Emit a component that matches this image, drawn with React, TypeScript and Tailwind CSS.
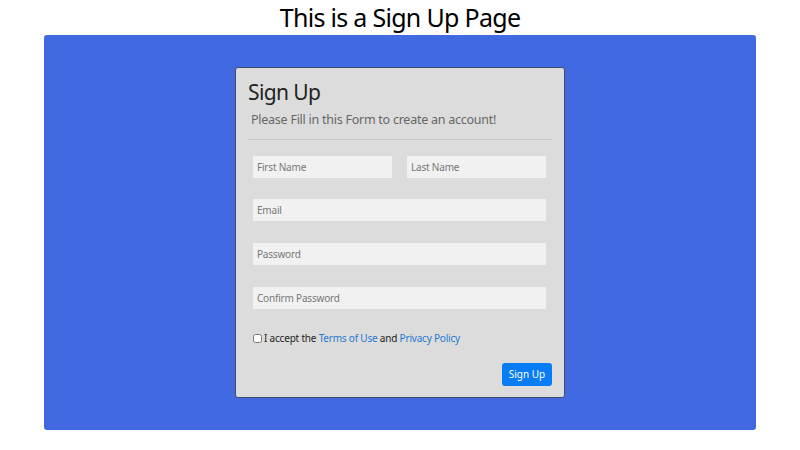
import React from "react";

export default function App() {
  const font = { fontFamily: '"Noto Sans", "Open Sans", sans-serif' };
  const inputCls =
    "h-[22px] bg-[#f1f1f1] px-[4px] text-[10px] tracking-[-0.2px] text-[#333] placeholder:text-[#777] outline-none border-0";
  return (
    <div className="w-[800px] h-[450px] bg-white" style={font}>
      <h1 className="h-[35px] text-center text-[25px] tracking-[-0.7px] leading-[35px] text-black">
        This is a Sign Up Page
      </h1>
      <div className="mx-[44px] h-[395px] rounded-[3px] bg-[#4169e1] pt-[32px]">
        <div className="mx-auto w-[330px] h-[331px] rounded-[3px] border border-[#3b4a66] bg-[#dcdcdc] px-[12px] pt-[9px]">
          <h2 className="text-[21px] tracking-[-0.6px] leading-[30px] text-[#222] font-normal">Sign Up</h2>
          <p className="mt-[4px] pl-[3px] text-[12.5px] tracking-[-0.25px] leading-[18px] text-[#666]">
            Please Fill in this Form to create an account!
          </p>
          <div className="mt-[10px] h-px bg-[#c8c8c8]" />
          <div className="pl-[5px] pr-[6px] pt-[16px]">
            <div className="flex gap-[15px]">
              <input className={inputCls + " w-[139px]"} placeholder="First Name" />
              <input className={inputCls + " w-[139px]"} placeholder="Last Name" />
            </div>
            <input className={inputCls + " mt-[21px] w-full block"} placeholder="Email" />
            <input className={inputCls + " mt-[22px] w-full block"} placeholder="Password" />
            <input className={inputCls + " mt-[22px] w-full block"} placeholder="Confirm Password" />
            <div className="mt-[21px] flex items-center text-[10px] tracking-[-0.2px] leading-[16px] text-[#222]">
              <input type="checkbox" className="m-0 mr-[2px] h-[9px] w-[9px]" />
              <span>
                I accept the <a className="text-[#1f78d1]">Terms of Use</a> and{" "}
                <a className="text-[#1f78d1]">Privacy Policy</a>
              </span>
            </div>
          </div>
          <div className="mt-[17px] flex justify-end">
            <button className="h-[23px] w-[50px] rounded-[3px] bg-[#087cf5] text-[10px] text-white">
              Sign Up
            </button>
          </div>
        </div>
      </div>
    </div>
  );
}
